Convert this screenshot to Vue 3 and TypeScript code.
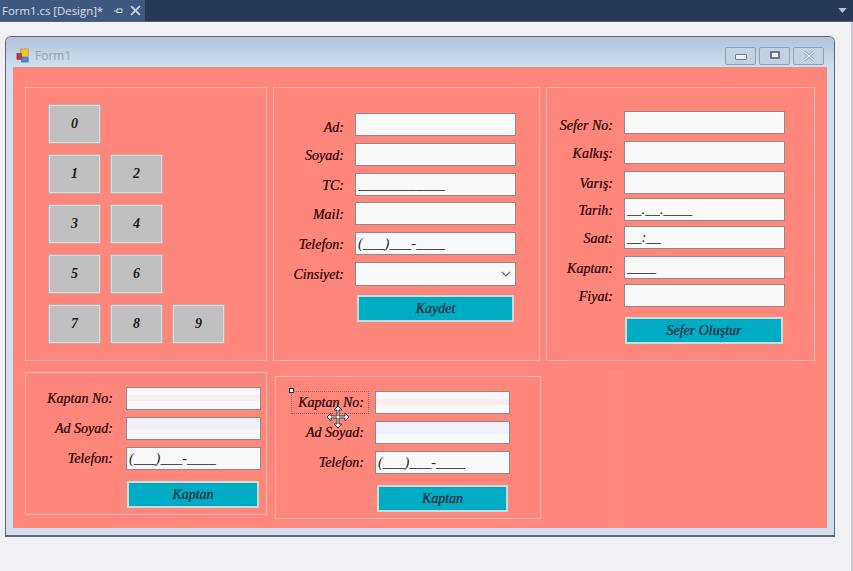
<!-- Form1 designer view -->
<template>
  <div class="ide">
    <header class="tabbar">
      <div class="tab">
        <span class="tab-title">Form1.cs [Design]*</span>
        <svg class="pin" viewBox="0 0 10 10" width="10" height="10">
          <path d="M1 5h3M4 3v4M4 3h5v3.5H4" fill="none" stroke="#d5dce8" stroke-width="1" />
        </svg>
        <svg class="tab-close" viewBox="0 0 10 10" width="11" height="11">
          <path d="M1 1l8 8M9 1l-8 8" stroke="#c9d2e0" stroke-width="1.6" />
        </svg>
      </div>
      <svg class="tab-menu" viewBox="0 0 10 6" width="9" height="5">
        <path d="M0 0h10L5 6z" fill="#b9c3d4" />
      </svg>
    </header>

    <main class="surface">
      <section class="window">
        <div class="titlebar">
          <svg class="form-icon" viewBox="0 0 16 16" width="15" height="15">
            <rect x="5" y="1" width="8" height="8" fill="#f2c230" stroke="#a9892a" stroke-width="0.6" />
            <rect x="1" y="6" width="5" height="6" fill="#bb3b2e" stroke="#7d2a22" stroke-width="0.6" />
            <rect x="6" y="10" width="7" height="5" fill="#4f86d6" stroke="#3a64a3" stroke-width="0.6" />
          </svg>
          <span class="form-title">Form1</span>
          <div class="controls">
            <div class="control">
              <span class="glyph-min"></span>
            </div>
            <div class="control">
              <span class="glyph-max"></span>
            </div>
            <div class="control">
              <svg viewBox="0 0 12 10" width="12" height="10">
                <path d="M1.5 1l9 8M10.5 1l-9 8" stroke="#8492a3" stroke-width="2.6" />
                <path d="M1.5 1l9 8M10.5 1l-9 8" stroke="#eef2f6" stroke-width="1.1" />
              </svg>
            </div>
          </div>
        </div>

        <div class="client">
          <div class="top-row">
            <div class="panel digits">
              <button
                v-for="d in digits"
                :key="d.label"
                class="digit"
                :class="d.cls"
              >
                {{ d.label }}
              </button>
            </div>

            <div
              v-for="form in topForms"
              :key="form.button"
              class="panel form"
              :class="form.cls"
            >
              <div
                v-for="row in form.rows"
                :key="row.label"
                class="row"
                :style="{ marginTop: row.gap + 'px' }"
              >
                <label class="label">{{ row.label }}</label>
                <div v-if="row.combo" class="field combo">
                  <svg viewBox="0 0 10 6" width="10" height="6">
                    <path d="M1 1l4 4 4-4" fill="none" stroke="#666" stroke-width="1.2" />
                  </svg>
                </div>
                <input v-else class="field" :class="row.tone" :value="row.mask" readonly />
              </div>
              <button class="action">{{ form.button }}</button>
            </div>
          </div>

          <div class="bottom-row">
            <div
              v-for="form in bottomForms"
              :key="form.cls"
              class="panel form"
              :class="form.cls"
            >
              <div
                v-for="(row, i) in form.rows"
                :key="row.label"
                class="row"
                :style="{ marginTop: row.gap + 'px' }"
              >
                <label class="label" :class="{ picked: form.selected && i === 0 }">
                  {{ row.label }}
                  <template v-if="form.selected && i === 0">
                    <span class="handle"></span>
                    <svg class="move" viewBox="0 0 24 24" width="24" height="24">
                      <path
                        d="M12 1l4 4h-3v6h6V8l4 4-4 4v-3h-6v6h3l-4 4-4-4h3v-6H5v3l-4-4 4-4v3h6V5H8z"
                        fill="#fff"
                        stroke="#333"
                        stroke-width="1"
                      />
                    </svg>
                  </template>
                </label>
                <input class="field" :class="row.tone" :value="row.mask" readonly />
              </div>
              <button class="action">{{ form.button }}</button>
            </div>
          </div>
          <div class="ghost-band"></div>
        </div>
      </section>
    </main>
  </div>
</template>

<script setup lang="ts">
  interface Row {
    label: string
    gap: number
    mask?: string
    combo?: boolean
    tone?: string
  }

  const digits = [
    { label: '0', cls: 'zero' },
    { label: '1', cls: 'first' },
    { label: '2', cls: '' },
    { label: '3', cls: 'first' },
    { label: '4', cls: '' },
    { label: '5', cls: 'first' },
    { label: '6', cls: '' },
    { label: '7', cls: 'first' },
    { label: '8', cls: '' },
    { label: '9', cls: '' },
  ]

  const phone = '(___)___-____'

  const topForms: { cls: string; button: string; rows: Row[] }[] = [
    {
      cls: 'person',
      button: 'Kaydet',
      rows: [
        { label: 'Ad:', gap: 0 },
        { label: 'Soyad:', gap: 7 },
        { label: 'TC:', gap: 7, mask: '____________' },
        { label: 'Mail:', gap: 6 },
        { label: 'Telefon:', gap: 7, mask: phone },
        { label: 'Cinsiyet:', gap: 7, combo: true },
      ],
    },
    {
      cls: 'trip',
      button: 'Sefer Oluştur',
      rows: [
        { label: 'Sefer No:', gap: 0 },
        { label: 'Kalkış:', gap: 7 },
        { label: 'Varış:', gap: 7 },
        { label: 'Tarih:', gap: 4, mask: '__.__.____' },
        { label: 'Saat:', gap: 5, mask: '__:__' },
        { label: 'Kaptan:', gap: 7, mask: '____' },
        { label: 'Fiyat:', gap: 5 },
      ],
    },
  ]

  const captainRows: Row[] = [
    { label: 'Kaptan No:', gap: 0, tone: 'tone-pink' },
    { label: 'Ad Soyad:', gap: 7, tone: 'tone-blue' },
    { label: 'Telefon:', gap: 7, mask: phone },
  ]

  const bottomForms = [
    { cls: 'captain-a', button: 'Kaptan', rows: captainRows, selected: false },
    { cls: 'captain-b', button: 'Kaptan', rows: captainRows, selected: true },
  ]
</script>

<style>
  html,
  body {
    margin: 0;
    overflow: hidden;
  }
</style>

<style scoped>
  .ide {
    width: 853px;
    height: 571px;
    display: flex;
    flex-direction: column;
    background: #f1f0f4;
    font-family: 'Liberation Serif', serif;
  }

  .tabbar {
    flex: none;
    height: 21px;
    display: flex;
    align-items: stretch;
    justify-content: space-between;
    background: #27395a;
    border-bottom: 1px solid #4a628a;
  }

  .tab {
    width: 145px;
    display: flex;
    align-items: center;
    padding-left: 2px;
    box-sizing: border-box;
    background: #3f5880;
    color: #d9e0ea;
    font: 11.4px 'Open Sans', sans-serif;
  }

  .tab-title {
    white-space: nowrap;
  }

  .pin {
    margin-left: 10px;
  }

  .tab-close {
    margin-left: 7px;
  }

  .tab-menu {
    align-self: center;
    margin-right: 6px;
  }

  .surface {
    flex: 1;
    padding: 14px 18px 0 5px;
    border-right: 2px solid #c9c9cf;
  }

  .window {
    width: 830px;
    height: 501px;
    box-sizing: border-box;
    border: 1px solid #63686c;
    border-bottom-width: 2px;
    border-radius: 6px 6px 0 0;
    background: #d0e0f0;
    padding: 0 7px 7px;
    display: flex;
    flex-direction: column;
  }

  .titlebar {
    flex: none;
    height: 30px;
    box-sizing: border-box;
    margin: 0 -7px;
    padding: 7px 10px 0;
    display: flex;
    align-items: center;
    border-radius: 5px 5px 0 0;
    background: linear-gradient(#b3c3d8, #cde0f0);
  }

  .form-title {
    margin-left: 4px;
    color: #9aa0a8;
    font: 12px 'Open Sans', sans-serif;
  }

  .controls {
    margin-left: auto;
    display: flex;
    gap: 3px;
  }

  .control {
    width: 31px;
    height: 18px;
    display: flex;
    align-items: center;
    justify-content: center;
    box-sizing: border-box;
    border: 1px solid #8fa0b6;
    border-radius: 2px;
    background: linear-gradient(#c4d2e2, #c0d2e4);
  }

  .glyph-min {
    width: 10px;
    height: 4px;
    margin-top: 3px;
    background: #eef1f5;
    border: 1px solid #717c8a;
    border-radius: 1px;
  }

  .glyph-max {
    width: 6px;
    height: 4px;
    margin-top: -2px;
    border: 2px solid #6e7a89;
    background: #eef1f5;
  }

  .client {
    flex: 1;
    position: relative;
    box-sizing: border-box;
    padding: 20px 12px 0;
    background: #ff867b;
    color: #3c1414;
    font-size: 14px;
    font-style: italic;
  }

  .ghost-band {
    position: absolute;
    left: 595px;
    top: 303px;
    width: 16px;
    height: 158px;
    background: rgba(255, 255, 255, 0.04);
  }

  .top-row {
    display: flex;
    gap: 6px;
  }

  .bottom-row {
    display: flex;
    align-items: flex-start;
    gap: 8px;
    margin-top: 11px;
  }

  .panel {
    box-sizing: border-box;
    border: 1px solid #ffb9b1;
  }

  .digits {
    width: 242px;
    height: 274px;
    padding: 16px 0 0 22px;
    display: grid;
    grid-template-columns: repeat(3, 53px);
    grid-auto-rows: 40px;
    gap: 10px 9px;
    align-content: start;
  }

  .digit {
    box-sizing: border-box;
    padding: 0;
    border: 2px solid #dddcdc;
    outline: 1px solid #cfa9a5;
    outline-offset: -1px;
    background: #c0c0c0;
    color: #1c1c1c;
    font: italic bold 14px 'Liberation Serif', serif;
  }

  .zero {
    grid-column: 1 / -1;
    width: 53px;
  }

  .first {
    grid-column: 1;
  }

  .form {
    display: flex;
    flex-direction: column;
    align-items: flex-start;
  }

  .person {
    width: 267px;
    height: 274px;
    padding: 25px 0 0 0;
    --label-w: 70px;
    --label-gap: 11px;
    --field-w: 161px;
    --btn-left: 83px;
    --btn-w: 157px;
    --btn-gap: 10px;
  }

  .trip {
    width: 269px;
    height: 274px;
    padding: 23px 0 0 0;
    --label-w: 66px;
    --label-gap: 11px;
    --field-w: 161px;
    --btn-left: 78px;
    --btn-w: 158px;
    --btn-gap: 10px;
  }

  .captain-a {
    width: 242px;
    height: 143px;
    padding: 14px 0 0 0;
    --label-w: 87px;
    --label-gap: 13px;
    --field-w: 135px;
    --btn-left: 101px;
    --btn-w: 132px;
    --btn-gap: 11px;
  }

  .captain-b {
    width: 266px;
    height: 143px;
    margin-top: 4px;
    padding: 14px 0 0 0;
    --label-w: 88px;
    --label-gap: 11px;
    --field-w: 135px;
    --btn-left: 101px;
    --btn-w: 131px;
    --btn-gap: 11px;
  }

  .row {
    display: flex;
    align-items: center;
    height: 23px;
  }

  .label {
    position: relative;
    width: var(--label-w);
    margin-right: var(--label-gap);
    text-align: right;
    white-space: nowrap;
    text-shadow: 0 0 0.5px #3c1414;
  }

  .top-row .label {
    padding-top: 2px;
  }

  .top-row .row:first-child .label {
    padding-top: 6px;
  }

  .picked {
    height: 23px;
    line-height: 23px;
  }

  .picked::before {
    content: '';
    position: absolute;
    left: 15px;
    right: -5px;
    top: 0;
    bottom: 0;
    border: 1px dotted #a8605a;
  }

  .handle {
    position: absolute;
    left: 13px;
    top: -3px;
    width: 3px;
    height: 3px;
    border: 1px solid #333;
    background: #fff;
  }

  .move {
    position: absolute;
    left: 50px;
    top: 14px;
  }

  .field {
    box-sizing: border-box;
    width: var(--field-w);
    height: 23px;
    padding: 0 2px;
    border: 1px solid #928a8a;
    border-radius: 0;
    outline: none;
    background: #f9f9f9;
    color: #222;
    font: italic 14.5px 'Liberation Serif', serif;
  }

  .combo {
    height: 24px;
    display: flex;
    align-items: center;
    justify-content: flex-end;
    padding-right: 4px;
  }

  .tone-pink {
    background: linear-gradient(#faf7f7 35%, #f8eeee 35%, #f8eeee 60%, #fbf9f9 60%);
  }

  .tone-blue {
    background: linear-gradient(#f1f1f9 55%, #f9f9fa 55%);
  }

  .action {
    width: var(--btn-w);
    height: 27px;
    margin: var(--btn-gap) 0 0 var(--btn-left);
    padding: 0;
    box-sizing: border-box;
    border: 2px solid #c9dcdc;
    background: #00abc4;
    color: #103a48;
    font: italic 14px 'Liberation Serif', serif;
    text-shadow: 0 0 0.5px #103a48;
  }
</style>
